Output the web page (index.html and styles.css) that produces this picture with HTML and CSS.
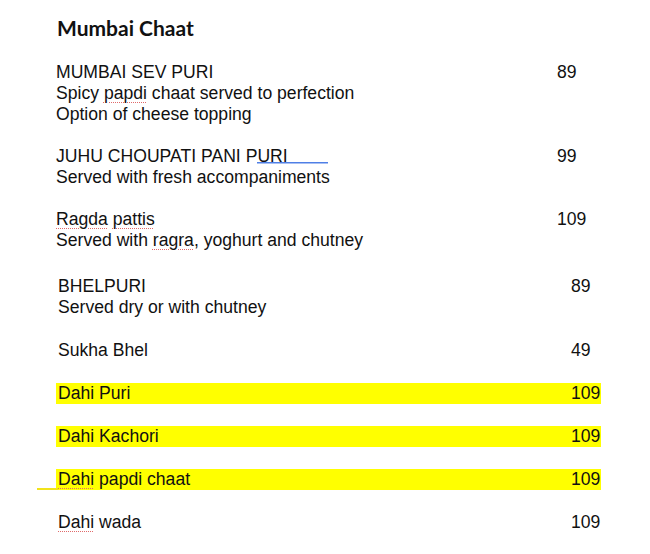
FILE: index.html
```html
<!DOCTYPE html>
<html>
<head>
<meta charset="utf-8">
<link rel="stylesheet" href="styles.css">
</head>
<body>
<main class="menu">
  <h1 class="title">Mumbai Chaat</h1>

  <section class="group group-a">
    <div class="item">
      <div class="row"><span class="name">MUMBAI SEV PURI</span><span class="price">89</span></div>
      <div class="desc">Spicy <span class="spell">papdi</span> chaat served to perfection</div>
      <div class="desc">Option of cheese topping</div>
    </div>
    <div class="item">
      <div class="row"><span class="name">JUHU CHOUPATI PANI P<span class="grammar">URI</span></span><span class="price">99</span></div>
      <div class="desc">Served with fresh accompaniments</div>
    </div>
    <div class="item">
      <div class="row"><span class="name"><span class="spell">Ragda</span> <span class="spell">pattis</span></span><span class="price">109</span></div>
      <div class="desc">Served with <span class="spell">ragra</span>, yoghurt and chutney</div>
    </div>
  </section>

  <section class="group group-b">
    <div class="item first">
      <div class="row"><span class="name">BHELPURI</span><span class="price">89</span></div>
      <div class="desc">Served dry or with chutney</div>
    </div>
    <div class="item">
      <div class="row"><span class="name">Sukha Bhel</span><span class="price">49</span></div>
    </div>
    <div class="item hl">
      <div class="row"><span class="name">Dahi Puri</span><span class="price">109</span></div>
    </div>
    <div class="item hl">
      <div class="row"><span class="name">Dahi Kachori</span><span class="price">109</span></div>
    </div>
    <div class="item hl mark">
      <div class="row"><span class="name"><span class="spell">Dahi</span> papdi chaat</span><span class="price">109</span></div>
    </div>
    <div class="item">
      <div class="row"><span class="name"><span class="spell">Dahi</span> wada</span><span class="price">109</span></div>
    </div>
  </section>
</main>
</body>
</html>
```

FILE: styles.css
```css
html, body {
  margin: 0;
  padding: 0;
  background: #ffffff;
}

.menu {
  padding: 17px 0 0 56px;
  width: 545px;
  font-family: "Liberation Sans", Arial, sans-serif;
  font-size: 17.6px;
  line-height: 21px;
  color: #111111;
}

.title {
  margin: 0 0 0 1px;
  font-family: Lato, "Open Sans", sans-serif;
  font-weight: 700;
  font-size: 21px;
  line-height: 22px;
  color: #111111;
}

.group-a {
  margin-top: 23px;
  display: flex;
  flex-direction: column;
  gap: 21px;
}

.row {
  display: flex;
  align-items: baseline;
}

.name {
  flex: 1;
}

.price {
  width: 44px;
}

.group-b {
  margin-top: 25px;
  display: flex;
  flex-direction: column;
  gap: 22px;
}

.group-b .name {
  padding-left: 2px;
}

.group-b .price {
  width: 30px;
}

.group-b .desc {
  padding-left: 2px;
}

.hl .row {
  background: #ffff00;
}

.mark {
  position: relative;
}

.mark::before {
  content: "";
  position: absolute;
  left: -19px;
  top: 19px;
  width: 21px;
  height: 2px;
  background: #f2e31a;
}

.spell {
  text-decoration: underline dotted #e06a6a;
  text-decoration-thickness: 1px;
  text-underline-offset: 3px;
}

.grammar {
  padding-right: 40px;
  background: linear-gradient(#4f7fe6, #4f7fe6) no-repeat left 0 bottom 3px / 100% 1.5px;
}
```
